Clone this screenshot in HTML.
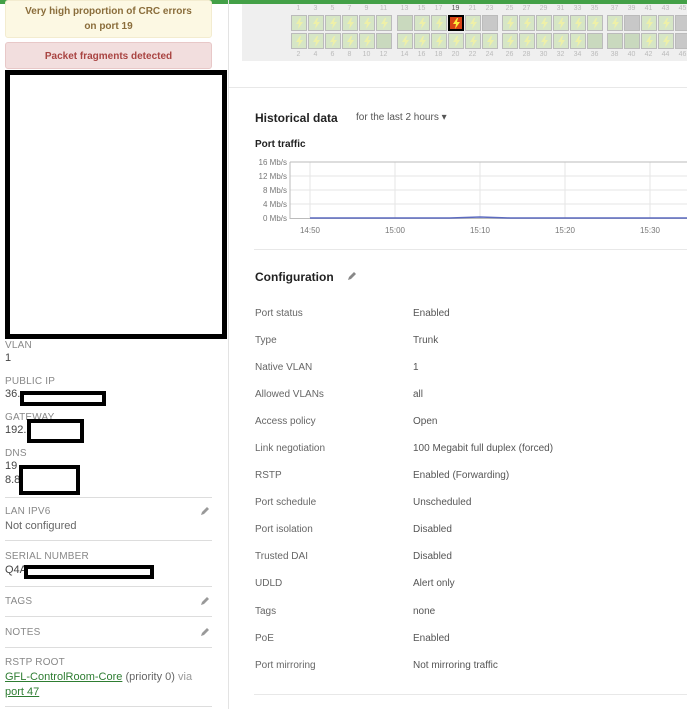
<!DOCTYPE html>
<html><head><meta charset="utf-8"><style>
*{margin:0;padding:0;box-sizing:border-box}
body{width:687px;height:709px;overflow:hidden;background:#fff;font-family:"Liberation Sans",sans-serif;position:relative;color:#333}
.a{position:absolute;white-space:nowrap}
.lbl{font-size:10px;color:#888;letter-spacing:.2px}
.val{font-size:11px;color:#444}
.hr{position:absolute;left:5px;width:207px;height:1px;background:#ddd}
.pen{position:absolute;width:12px;height:12px}
.port{position:absolute;width:16px;height:16px;border:1px solid #bbb;background:#d6e6c6}
.port svg{position:absolute;left:3px;top:2px}
.num{position:absolute;font-size:7px;color:#bbb;width:17px;text-align:center}
.cl{position:absolute;left:255px;font-size:10px;color:#666}
.cv{position:absolute;left:413px;font-size:10px;color:#555}
</style></head><body>
<div class="a" style="left:0;top:0;width:687px;height:4px;background:#43a047"></div>
<div class="a" style="left:228px;top:0;width:1px;height:709px;background:#e3e3e3"></div>
<div class="a" style="left:5px;top:0;width:207px;height:38px;background:#fcf8e3;border:1px solid #f3ecd0;border-radius:3px;font-size:10px;font-weight:bold;color:#8a6d3b;text-align:center;line-height:15px;padding-top:3px;white-space:normal">Very high proportion of CRC errors<br>on port 19</div>
<div class="a" style="left:5px;top:42px;width:207px;height:27px;background:#f2dede;border:1px solid #e8c8c8;border-radius:3px;font-size:10px;font-weight:bold;color:#a94442;text-align:center;line-height:27px">Packet fragments detected</div>
<div class="a" style="left:5px;top:70px;width:222px;height:269px;border:5px solid #000;background:#fff"></div>
<div class="a lbl" style="left:5px;top:340px">VLAN</div>
<div class="a val" style="left:5px;top:352px">1</div>
<div class="a lbl" style="left:5px;top:376px">PUBLIC IP</div>
<div class="a val" style="left:5px;top:388px">36.</div>
<div class="a" style="left:20px;top:391px;width:86px;height:15px;border:4px solid #000;background:#fff"></div>
<div class="a lbl" style="left:5px;top:412px">GATEWAY</div>
<div class="a val" style="left:5px;top:424px">192.1</div>
<div class="a" style="left:27px;top:419px;width:57px;height:24px;border:4px solid #000;background:#fff"></div>
<div class="a lbl" style="left:5px;top:448px">DNS</div>
<div class="a val" style="left:5px;top:460px">19</div>
<div class="a val" style="left:5px;top:474px">8.8</div>
<div class="a" style="left:19px;top:465px;width:61px;height:30px;border:4px solid #000;background:#fff"></div>
<div class="hr" style="top:497px"></div>
<div class="a lbl" style="left:5px;top:506px">LAN IPV6</div>
<div class="a val" style="left:5px;top:520px;color:#666">Not configured</div>
<div class="hr" style="top:540px"></div>
<div class="a lbl" style="left:5px;top:551px">SERIAL NUMBER</div>
<div class="a val" style="left:5px;top:564px">Q4A</div>
<div class="a" style="left:24px;top:565px;width:130px;height:14px;border:4px solid #000;background:#fff"></div>
<div class="hr" style="top:586px"></div>
<div class="a lbl" style="left:5px;top:596px">TAGS</div>
<div class="hr" style="top:616px"></div>
<div class="a lbl" style="left:5px;top:627px">NOTES</div>
<div class="hr" style="top:647px"></div>
<div class="a lbl" style="left:5px;top:657px">RSTP ROOT</div>
<div class="a val" style="left:5px;top:671px"><span style="color:#2e7d32;text-decoration:underline">GFL-ControlRoom-Core</span> <span style="color:#666">(priority 0)</span> <span style="color:#999">via</span></div>
<div class="a val" style="left:5px;top:686px;color:#2e7d32;text-decoration:underline">port 47</div>
<div class="hr" style="top:706px"></div>
<svg class="pen" style="left:199px;top:505px" viewBox="0 0 12 12"><path d="M2 10l1-3 5-5 2 2-5 5z" fill="#999"/></svg>
<svg class="pen" style="left:199px;top:595px" viewBox="0 0 12 12"><path d="M2 10l1-3 5-5 2 2-5 5z" fill="#999"/></svg>
<svg class="pen" style="left:199px;top:626px" viewBox="0 0 12 12"><path d="M2 10l1-3 5-5 2 2-5 5z" fill="#999"/></svg>
<div class="a" style="left:242px;top:4px;width:445px;height:57px;background:#efefef"></div>
<div id="ports"></div>
<div class="a" style="left:229px;top:87px;width:458px;height:1px;background:#e8e8e8"></div>
<div class="a" style="left:255px;top:111px;font-size:12px;font-weight:bold;color:#222">Historical data</div>
<div class="a" style="left:356px;top:112px;font-size:10px;color:#555">for the last 2 hours ▾</div>
<div class="a" style="left:255px;top:139px;font-size:10px;font-weight:bold;color:#222">Port traffic</div>
<svg class="a" style="left:250px;top:155px" width="437" height="85">
<g font-family="Liberation Sans" font-size="8" fill="#777" text-anchor="end">
<text x="37" y="10">16 Mb/s</text><text x="37" y="24">12 Mb/s</text><text x="37" y="38">8 Mb/s</text><text x="37" y="52">4 Mb/s</text><text x="37" y="66">0 Mb/s</text></g>
<g stroke="#e6e6e6"><line x1="40" y1="21" x2="437" y2="21"/><line x1="40" y1="35" x2="437" y2="35"/><line x1="40" y1="49" x2="437" y2="49"/>
<line x1="60" y1="7" x2="60" y2="64"/><line x1="145" y1="7" x2="145" y2="64"/><line x1="230" y1="7" x2="230" y2="64"/><line x1="315" y1="7" x2="315" y2="64"/><line x1="400" y1="7" x2="400" y2="64"/></g>
<line x1="40" y1="7" x2="437" y2="7" stroke="#bbb"/>
<line x1="40" y1="63.5" x2="437" y2="63.5" stroke="#bbb"/>
<line x1="40" y1="7" x2="40" y2="64" stroke="#bbb"/>
<path d="M60 63 L200 63 L230 62 L260 63 L437 63" stroke="#5c6bc0" stroke-width="1.5" fill="none"/>
<g font-family="Liberation Sans" font-size="8" fill="#777" text-anchor="middle">
<text x="60" y="78">14:50</text><text x="145" y="78">15:00</text><text x="230" y="78">15:10</text><text x="315" y="78">15:20</text><text x="400" y="78">15:30</text></g>
</svg>
<div class="a" style="left:254px;top:249px;width:433px;height:1px;background:#e8e8e8"></div>
<div class="a" style="left:255px;top:270px;font-size:12px;font-weight:bold;color:#222">Configuration</div>
<svg class="pen" style="left:346px;top:270px" viewBox="0 0 12 12"><path d="M2 10l1-3 5-5 2 2-5 5z" fill="#888"/></svg>
<div id="cfg"></div>
<div class="a" style="left:254px;top:694px;width:433px;height:1px;background:#e8e8e8"></div>
<script>
var P=document.getElementById('ports'),h='';
function bolt(c){return '<svg width="9" height="11" viewBox="0 0 9 11"><path d="M5 0L1 6h3l-1 5 5-7H5l1-4z" fill="'+c+'"/></svg>'}
function xs(i){var g=Math.floor(i/6);return 291+i*17+[0,4,7,10][g]}
var r1=['b','b','b','b','b','b','n','b','b','r','b','g','b','b','b','b','b','b','b','g','b','b','g'];
var r2=['b','b','b','b','b','n','b','b','b','b','b','b','b','b','b','b','b','n','n','n','b','b','g'];
for(var i=0;i<23;i++){var x=xs(i);
h+='<div class="num" style="left:'+(x-1)+'px;top:5px;'+(i==9?'color:#555':'')+'">'+(2*i+1)+'</div>';
h+='<div class="num" style="left:'+(x-1)+'px;top:51px">'+(2*i+2)+'</div>';
[[r1[i],15],[r2[i],33]].forEach(function(p){var t=p[0],s='left:'+x+'px;top:'+p[1]+'px;';
if(t=='r')h+='<div class="port" style="'+s+'background:#d84315;border:2px solid #000">'+bolt('#ffeb3b').replace('<svg','<svg style="left:2px;top:1px"')+'</div>';
else if(t=='g')h+='<div class="port" style="'+s+'background:#c8c8c8"></div>';
else if(t=='n')h+='<div class="port" style="'+s+'background:#c9d9be"></div>';
else h+='<div class="port" style="'+s+'">'+bolt('#eef0a8')+'</div>';});}
P.innerHTML=h;
var C=[['Port status','Enabled'],['Type','Trunk'],['Native VLAN','1'],['Allowed VLANs','all'],['Access policy','Open'],['Link negotiation','100 Megabit full duplex (forced)'],['RSTP','Enabled (Forwarding)'],['Port schedule','Unscheduled'],['Port isolation','Disabled'],['Trusted DAI','Disabled'],['UDLD','Alert only'],['Tags','none'],['PoE','Enabled'],['Port mirroring','Not mirroring traffic']],c='';
C.forEach(function(r,i){var y=308+i*27+(i>=11?1:0);c+='<div class="cl" style="top:'+y+'px">'+r[0]+'</div><div class="cv" style="top:'+y+'px">'+r[1]+'</div>';});
document.getElementById('cfg').innerHTML=c;
</script>
</body></html>
